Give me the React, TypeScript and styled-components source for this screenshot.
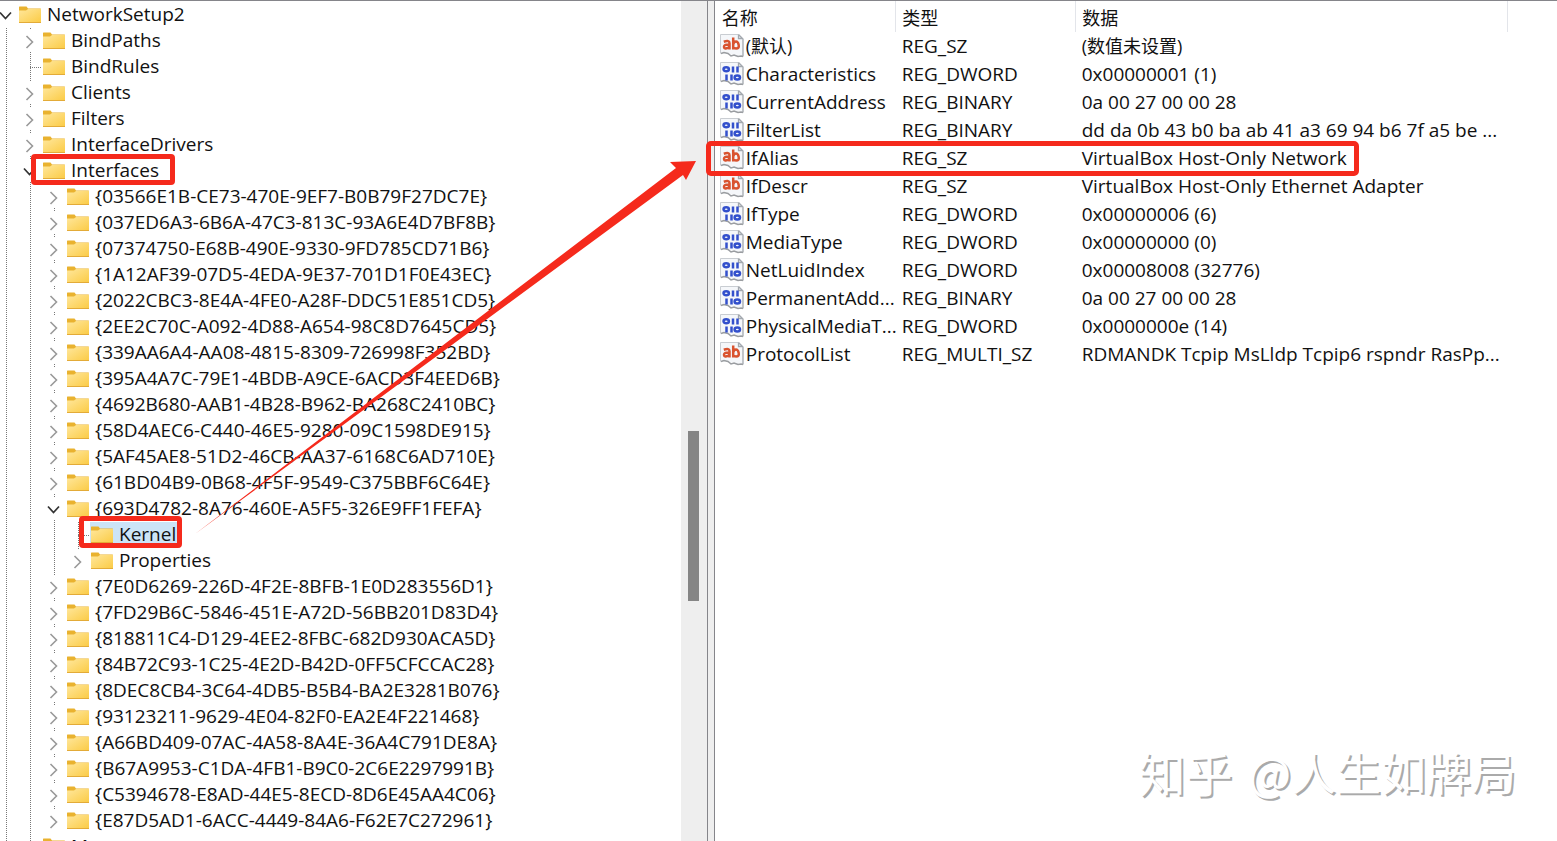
import React from "react";
import styled, { createGlobalStyle, css } from "styled-components";

const RED = "#f52a1c";
const DOTS = "repeating-linear-gradient(to bottom, #777 0 1px, transparent 1px 2px)";

const Global = createGlobalStyle`
  * { box-sizing: border-box; }
  html, body, #root { height: 100%; margin: 0; }
  body {
    overflow: hidden;
    background: #fff;
    color: #111;
    font: 19px/26px "Open Sans", "Noto Sans CJK SC", sans-serif;
  }
`;

const Window = styled.main`
  position: relative;
  height: 100vh;
  display: grid;
  grid-template-columns: minmax(0, 5fr) minmax(0, 6fr);
  overflow: hidden;
  border-top: 1px solid #85858a;
`;

const TreePane = styled.section`
  display: flex;
  min-width: 0;
  overflow: hidden;
`;

const TreeArea = styled.div`
  flex: 1;
  min-width: 0;
  overflow: hidden;
`;

const Tree = styled.ul`
  list-style: none;
  margin: 1px 0 0 -6px;
  padding: 0;
`;

const Group = styled.ul`
  list-style: none;
  margin: 0;
  padding: 0;
`;

const Row = styled.div`
  display: flex;
  align-items: center;
  height: 26px;
`;

type Line = "none" | "full" | "top";

const Guide = styled.span<{ $line: Line }>`
  flex: none;
  width: 24px;
  height: 26px;
  display: flex;
  align-items: center;
  justify-content: center;
  background-repeat: no-repeat;
  background-position: 12px 0;
  background-size: 1px ${(p) => (p.$line === "full" ? "26px" : "12px")};
  ${(p) => p.$line !== "none" && css`background-image: ${DOTS};`}
`;

const Branch = styled.span`
  width: 12px;
  height: 1px;
  margin-left: 12px;
  background: repeating-linear-gradient(to right, #777 0 1px, transparent 1px 2px);
`;

const Twisty = styled.button`
  width: 16px;
  height: 22px;
  padding: 0;
  border: 0;
  background: #fff;
  display: flex;
  align-items: center;
  justify-content: center;
`;

const Entry = styled.span<{ $selected?: boolean }>`
  position: relative;
  display: flex;
  align-items: center;
  gap: 6px;
  height: 26px;
  padding: 0 4px 0 1px;
  white-space: nowrap;
  background: ${(p) => (p.$selected ? "#cce4f7" : "transparent")};
`;

const Label = styled.span`
  padding-bottom: 2px;
`;

const Mark = styled.span<{ $wide?: boolean }>`
  position: absolute;
  inset: ${(p) => (p.$wide ? "-4px -12px -1px -11px" : "-6px -2px 0 -11px")};
  border: 5px solid ${RED};
  border-radius: 4px;
  pointer-events: none;
`;

const Scrollbar = styled.div`
  flex: none;
  width: 27px;
  background: #eee;
  display: grid;
  grid-template-rows: 430fr 170fr 240fr;
  padding: 0 9px 0 7px;
`;

const Thumb = styled.div`
  grid-row: 2;
  background: #858585;
`;

const ValuePane = styled.section`
  border-left: 6px solid #eee;
  box-shadow: -1px 0 #85858a;
  min-width: 0;
`;

const ValueFrame = styled.div`
  height: 100%;
  padding-left: 1px;
  border-left: 1px solid #85858a;
`;

const ValueTable = styled.table`
  width: 100%;
  table-layout: fixed;
  border-collapse: collapse;
`;

const Head = styled.th`
  height: 31px;
  padding: 2px 6px 0;
  border-right: 1px solid #e3e5ea;
  font-size: 18px;
  font-weight: 400;
  text-align: left;
  &:last-child { border-right: 0; }
`;

const Cell = styled.td`
  position: relative;
  height: 28px;
  padding: 0 0 0 6px;
  white-space: nowrap;
`;

const NameCell = styled.div`
  display: flex;
  align-items: center;
  gap: 2px;
  margin-left: -2px;
  & > svg { flex: none; }
`;

const Cjk = styled.span`
  font-size: 18px;
`;

const RowMark = styled.span`
  position: absolute;
  z-index: 1;
  top: -3px;
  left: -10px;
  width: 653px;
  height: 35px;
  border: 5px solid ${RED};
  border-radius: 5px;
  pointer-events: none;
`;

const Arrow = styled.svg`
  position: absolute;
  left: 195px;
  top: 156px;
  pointer-events: none;
`;

const Watermark = styled.p`
  position: absolute;
  right: 41px;
  bottom: 37px;
  display: flex;
  gap: 16px;
  margin: 0;
  color: #fff;
  font: 45px/64px "Noto Sans CJK SC", sans-serif;
  text-shadow: 2px 2px 0 #aaa;
`;

const WatermarkSite = styled.span`
  font-size: 47px;
`;

type Node = { name: string; leaf?: boolean; selected?: boolean; marked?: boolean; children?: Node[] };

const tree: Node[] = [
  {
    name: "NetworkSetup2",
    children: [
      { name: "BindPaths" },
      { name: "BindRules", leaf: true },
      { name: "Clients" },
      { name: "Filters" },
      { name: "InterfaceDrivers" },
      {
        name: "Interfaces",
        marked: true,
        children: [
          { name: "{03566E1B-CE73-470E-9EF7-B0B79F27DC7E}" },
          { name: "{037ED6A3-6B6A-47C3-813C-93A6E4D7BF8B}" },
          { name: "{07374750-E68B-490E-9330-9FD785CD71B6}" },
          { name: "{1A12AF39-07D5-4EDA-9E37-701D1F0E43EC}" },
          { name: "{2022CBC3-8E4A-4FE0-A28F-DDC51E851CD5}" },
          { name: "{2EE2C70C-A092-4D88-A654-98C8D7645CD5}" },
          { name: "{339AA6A4-AA08-4815-8309-726998F352BD}" },
          { name: "{395A4A7C-79E1-4BDB-A9CE-6ACD3F4EED6B}" },
          { name: "{4692B680-AAB1-4B28-B962-BA268C2410BC}" },
          { name: "{58D4AEC6-C440-46E5-9280-09C1598DE915}" },
          { name: "{5AF45AE8-51D2-46CB-AA37-6168C6AD710E}" },
          { name: "{61BD04B9-0B68-4F5F-9549-C375BBF6C64E}" },
          {
            name: "{693D4782-8A76-460E-A5F5-326E9FF1FEFA}",
            children: [
              { name: "Kernel", leaf: true, selected: true, marked: true },
              { name: "Properties" },
            ],
          },
          { name: "{7E0D6269-226D-4F2E-8BFB-1E0D283556D1}" },
          { name: "{7FD29B6C-5846-451E-A72D-56BB201D83D4}" },
          { name: "{818811C4-D129-4EE2-8FBC-682D930ACA5D}" },
          { name: "{84B72C93-1C25-4E2D-B42D-0FF5CFCCAC28}" },
          { name: "{8DEC8CB4-3C64-4DB5-B5B4-BA2E3281B076}" },
          { name: "{93123211-9629-4E04-82F0-EA2E4F221468}" },
          { name: "{A66BD409-07AC-4A58-8A4E-36A4C791DE8A}" },
          { name: "{B67A9953-C1DA-4FB1-B9C0-2C6E2297991B}" },
          { name: "{C5394678-E8AD-44E5-8ECD-8D6E45AA4C06}" },
          { name: "{E87D5AD1-6ACC-4449-84A6-F62E7C272961}" },
        ],
      },
      { name: "M", leaf: true },
    ],
  },
];

type Value = { name: string; type: string; data: string; cjk?: boolean; marked?: boolean };

const values: Value[] = [
  { name: "(默认)", type: "REG_SZ", data: "(数值未设置)", cjk: true },
  { name: "Characteristics", type: "REG_DWORD", data: "0x00000001 (1)" },
  { name: "CurrentAddress", type: "REG_BINARY", data: "0a 00 27 00 00 28" },
  { name: "FilterList", type: "REG_BINARY", data: "dd da 0b 43 b0 ba ab 41 a3 69 94 b6 7f a5 be ..." },
  { name: "IfAlias", type: "REG_SZ", data: "VirtualBox Host-Only Network", marked: true },
  { name: "IfDescr", type: "REG_SZ", data: "VirtualBox Host-Only Ethernet Adapter" },
  { name: "IfType", type: "REG_DWORD", data: "0x00000006 (6)" },
  { name: "MediaType", type: "REG_DWORD", data: "0x00000000 (0)" },
  { name: "NetLuidIndex", type: "REG_DWORD", data: "0x00008008 (32776)" },
  { name: "PermanentAdd...", type: "REG_BINARY", data: "0a 00 27 00 00 28" },
  { name: "PhysicalMediaT...", type: "REG_DWORD", data: "0x0000000e (14)" },
  { name: "ProtocolList", type: "REG_MULTI_SZ", data: "RDMANDK Tcpip MsLldp Tcpip6 rspndr RasPp..." },
];

const FolderIcon = () => (
  <svg width="22" height="18" viewBox="0 0 22 18" aria-hidden="true">
    <defs>
      <linearGradient id="folder" x1="0" y1="0" x2="1" y2="1">
        <stop offset="0" stopColor="#ffe79c" />
        <stop offset="1" stopColor="#fbcb45" />
      </linearGradient>
    </defs>
    <path d="M0 1Q0 .5 .5 .5H7.500l1.500 2H21.500Q22 2.500 22 3V9H0Z" fill="#e9b22f" />
    <path d="M0 4.500H7L9 3H22V16.500H0Z" fill="url(#folder)" />
    <path d="M0 16H22V17H0Z" fill="#e3ab38" />
  </svg>
);

const Chevron = ({ open }: { open: boolean }) => (
  <svg width="14" height="16" viewBox="0 0 14 16" fill="none" aria-hidden="true">
    {open ? (
      <path d="M1 5.500L6.500 11.500l5.500-6" stroke="#333" strokeWidth="1.700" />
    ) : (
      <path d="M3.500 3L9.500 9l-6 6" stroke="#999" strokeWidth="1.600" />
    )}
  </svg>
);

const ValueIcon = ({ text }: { text: boolean }) => (
  <svg width="24" height="24" viewBox="0 0 24 24" fill="none" aria-hidden="true">
    <path d="M.5 .5H19l4 4V22.500L20 21l-3 1.500-4-2.500-3 1-3-2.500-3 1-3.500-.5Z" fill="#f5f7fa" />
    <path d="M.5 19.500V.5H18.500" stroke="#c9cdd2" />
    <path d="M18.500 .5l4.500 4.500V22.500M18.500 .5V4.500h4" stroke="#a3a8ae" strokeWidth="1.300" />
    <path d="M1 19.500l3-1 4 1 3 2.500 3-1 4 1.500 3-.5 2 .5" stroke="#9a9da1" strokeWidth="1.500" />
    {text ? (
      <g stroke="#d9532f" strokeWidth="2.500">
        <path d="M3.800 7.800Q9.500 5.800 9.500 9.200V15.500M9.500 10.500Q4 10.300 4 12.700t2.400 1.600Q9 14.200 9.500 12" />
        <path d="M13.200 3.500V15.500M13.200 10.500Q14 7.500 16 7.500T18.700 11 16 14.400 13.200 12.300" />
      </g>
    ) : (
      <g stroke="#3350cc" strokeWidth="2.500">
        <ellipse cx="6.200" cy="7.300" rx="2.700" ry="2" />
        <path d="M13 4.500v6M17.500 4.500v6M6.500 12.500v6M11.500 12.500v6" />
        <ellipse cx="17.300" cy="15.500" rx="2.700" ry="2" />
      </g>
    )}
  </svg>
);

function TreeItem({ node, guides, last }: { node: Node; guides: Line[]; last: boolean }) {
  const depth = guides.length;
  const own: Line = depth === 0 ? "none" : last ? "top" : "full";
  const inner: Line = depth === 0 || !last ? "full" : "none";
  return (
    <li>
      <Row>
        {guides.map((line, i) => (
          <Guide key={i} $line={line} />
        ))}
        <Guide $line={own}>
          {node.leaf ? (
            <Branch />
          ) : (
            <Twisty type="button" aria-label={node.name} aria-expanded={!!node.children}>
              <Chevron open={!!node.children} />
            </Twisty>
          )}
        </Guide>
        <Entry $selected={node.selected}>
          <FolderIcon />
          <Label>{node.name}</Label>
          {node.marked && <Mark $wide={!node.selected} />}
        </Entry>
      </Row>
      {node.children && (
        <Group>
          {node.children.map((child, i) => (
            <TreeItem
              key={child.name}
              node={child}
              guides={[...guides, inner]}
              last={i === node.children!.length - 1}
            />
          ))}
        </Group>
      )}
    </li>
  );
}

const COLUMN_WIDTHS = [180, 180, 432];

export default function App() {
  return (
    <Window>
      <Global />
      <TreePane>
        <TreeArea>
          <Tree>
            {tree.map((node) => (
              <TreeItem key={node.name} node={node} guides={[]} last />
            ))}
          </Tree>
        </TreeArea>
        <Scrollbar>
          <Thumb />
        </Scrollbar>
      </TreePane>
      <ValuePane>
        <ValueFrame>
          <ValueTable>
            <colgroup>
              {COLUMN_WIDTHS.map((width, i) => (
                <col key={i} style={{ width }} />
              ))}
              <col />
            </colgroup>
            <thead>
              <tr>
                <Head>名称</Head>
                <Head>类型</Head>
                <Head>数据</Head>
                <Head as="td" />
              </tr>
            </thead>
            <tbody>
              {values.map((v) => (
                <tr key={v.name}>
                  <Cell>
                    <NameCell>
                      <ValueIcon text={v.type.endsWith("SZ")} />
                      {v.cjk ? <Cjk>{v.name}</Cjk> : <span>{v.name}</span>}
                    </NameCell>
                    {v.marked && <RowMark />}
                  </Cell>
                  <Cell>{v.type}</Cell>
                  <Cell>{v.cjk ? <Cjk>{v.data}</Cjk> : v.data}</Cell>
                  <Cell />
                </tr>
              ))}
            </tbody>
          </ValueTable>
        </ValueFrame>
      </ValuePane>
      <Arrow width="502" height="378" viewBox="0 0 502 378" aria-hidden="true">
        <path d="M0 377L481 11l-6-6 26-1-10 19-3-5Z" fill={RED} />
      </Arrow>
      <Watermark>
        <WatermarkSite>知乎</WatermarkSite>
        <span>@人生如牌局</span>
      </Watermark>
    </Window>
  );
}
